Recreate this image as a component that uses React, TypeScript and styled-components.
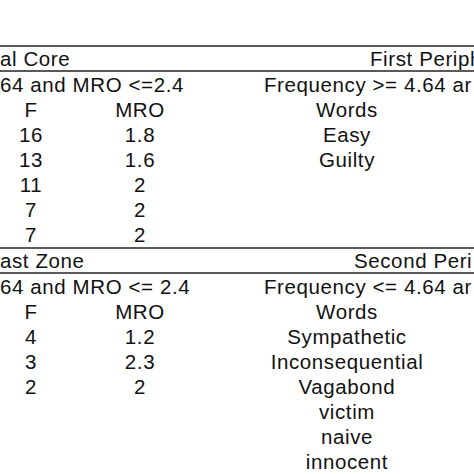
import styled, { createGlobalStyle } from 'styled-components';

type LeftRow = { f?: string; mro?: string };
type Section = {
  title: string;
  rightTitle: string;
  rightIndent: number;
  leftRule: string;
  rightRule: string;
  rows: { left?: LeftRow; word?: string }[];
};

const sections: Section[] = [
  {
    title: 'al Core',
    rightTitle: 'First Periph',
    rightIndent: 152,
    leftRule: '64 and MRO <=2.4',
    rightRule: 'Frequency >= 4.64 ar',
    rows: [
      { left: { f: 'F', mro: 'MRO' }, word: 'Words' },
      { left: { f: '16', mro: '1.8' }, word: 'Easy' },
      { left: { f: '13', mro: '1.6' }, word: 'Guilty' },
      { left: { f: '11', mro: '2' } },
      { left: { f: '7', mro: '2' } },
      { left: { f: '7', mro: '2' } },
    ],
  },
  {
    title: 'ast Zone',
    rightTitle: 'Second Peri',
    rightIndent: 136,
    leftRule: '64 and MRO <= 2.4',
    rightRule: 'Frequency <= 4.64 ar',
    rows: [
      { left: { f: 'F', mro: 'MRO' }, word: 'Words' },
      { left: { f: '4', mro: '1.2' }, word: 'Sympathetic' },
      { left: { f: '3', mro: '2.3' }, word: 'Inconsequential' },
      { left: { f: '2', mro: '2' }, word: 'Vagabond' },
      { word: 'victim' },
      { word: 'naive' },
      { word: 'innocent' },
    ],
  },
];

function App() {
  return (
    <>
      <GlobalStyle />
      <Page>
        {sections.map((s) => (
          <div key={s.title}>
            <HeaderRow>
              <LeftText>{s.title}</LeftText>
              <RightText indent={s.rightIndent}>{s.rightTitle}</RightText>
            </HeaderRow>
            <Row>
              <LeftText>{s.leftRule}</LeftText>
              <RightText indent={46}>{s.rightRule}</RightText>
            </Row>
            {s.rows.map((r, i) => (
              <Row key={i}>
                <Cell>{r.left?.f}</Cell>
                <Cell>{r.left?.mro}</Cell>
                <Cell>{r.word}</Cell>
              </Row>
            ))}
          </div>
        ))}
      </Page>
    </>
  );
}

// style
const GlobalStyle = createGlobalStyle`
  html, body {
    margin: 0;
    padding: 0;
    background: #ffffff;
    overflow: hidden;
  }
  body {
    font-family: 'Liberation Sans', Arial, sans-serif;
    color: #111111;
  }
`;

const Page = styled.div`
  width: 474px;
  height: 474px;
  overflow: hidden;
  padding-top: 45px;
  box-sizing: border-box;
  font-size: 20.5px;
  letter-spacing: 0.6px;
`;

const Row = styled.div`
  display: grid;
  grid-template-columns: 62px 156px 258px;
  height: 25px;
  align-items: center;
  white-space: nowrap;
`;

const HeaderRow = styled(Row)`
  height: 23px;
  border-top: 2px solid #5a5a5a;
  border-bottom: 2px solid #5a5a5a;
  box-sizing: content-box;
`;

const LeftText = styled.span`
  grid-column: 1 / 3;
  text-align: left;
`;

const RightText = styled.span<{ indent: number }>`
  grid-column: 3;
  padding-left: ${({ indent }) => indent}px;
`;

const Cell = styled.span`
  text-align: center;
`;

export default App;
